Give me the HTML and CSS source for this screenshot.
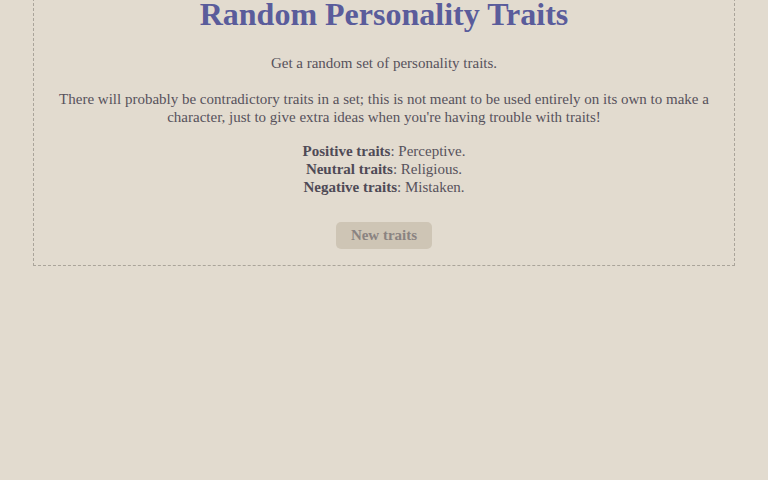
FILE: index.html
```html
<!DOCTYPE html>
<html lang="en">
<head>
  <meta charset="UTF-8" />
  <meta name="viewport" content="width=device-width, initial-scale=1.0"/>
  <title>Random Personality Traits</title>
  <link rel="stylesheet" href="styles.css">
</head>
<body>

  <main class="generator">
    <h1>Random Personality Traits</h1>
    <p class="intro">Get a random set of personality traits.</p>
    <p class="intro">There will probably be contradictory traits in a set; this is not meant to be used entirely on its own to make a character, just to give extra ideas when you're having trouble with traits!</p>

    <div class="traits">
      <div><b>Positive traits</b>: Perceptive.</div>
      <div><b>Neutral traits</b>: Religious.</div>
      <div><b>Negative traits</b>: Mistaken.</div>
    </div>

    <button class="new-btn" type="button">New traits</button>
  </main>

</body>
</html>
```

FILE: styles.css
```css
* {
  margin: 0;
  padding: 0;
  box-sizing: border-box;
}

body {
  font-family: 'Liberation Serif', 'Times New Roman', serif;
  background-color: #e2dbcf;
  color: #57525c;
  font-size: 15px;
  line-height: 18px;
}

.generator {
  width: 702px;
  margin: -22px auto 0;
  padding: 17px 24px 16px;
  border: 1px dashed #aaa49a;
  text-align: center;
}

h1 {
  color: #5a5c9b;
  font-size: 32px;
  line-height: 37px;
  margin-bottom: 21px;
}

.intro {
  margin-bottom: 18px;
}

.traits {
  margin-top: -2px;
}

.traits b {
  color: #4f4a56;
}

.new-btn {
  margin-top: 26px;
  width: 96px;
  height: 27px;
  border: none;
  border-radius: 5px;
  background: #cec5b5;
  color: #8a8381;
  font-family: inherit;
  font-size: 15px;
  font-weight: bold;
}
```
